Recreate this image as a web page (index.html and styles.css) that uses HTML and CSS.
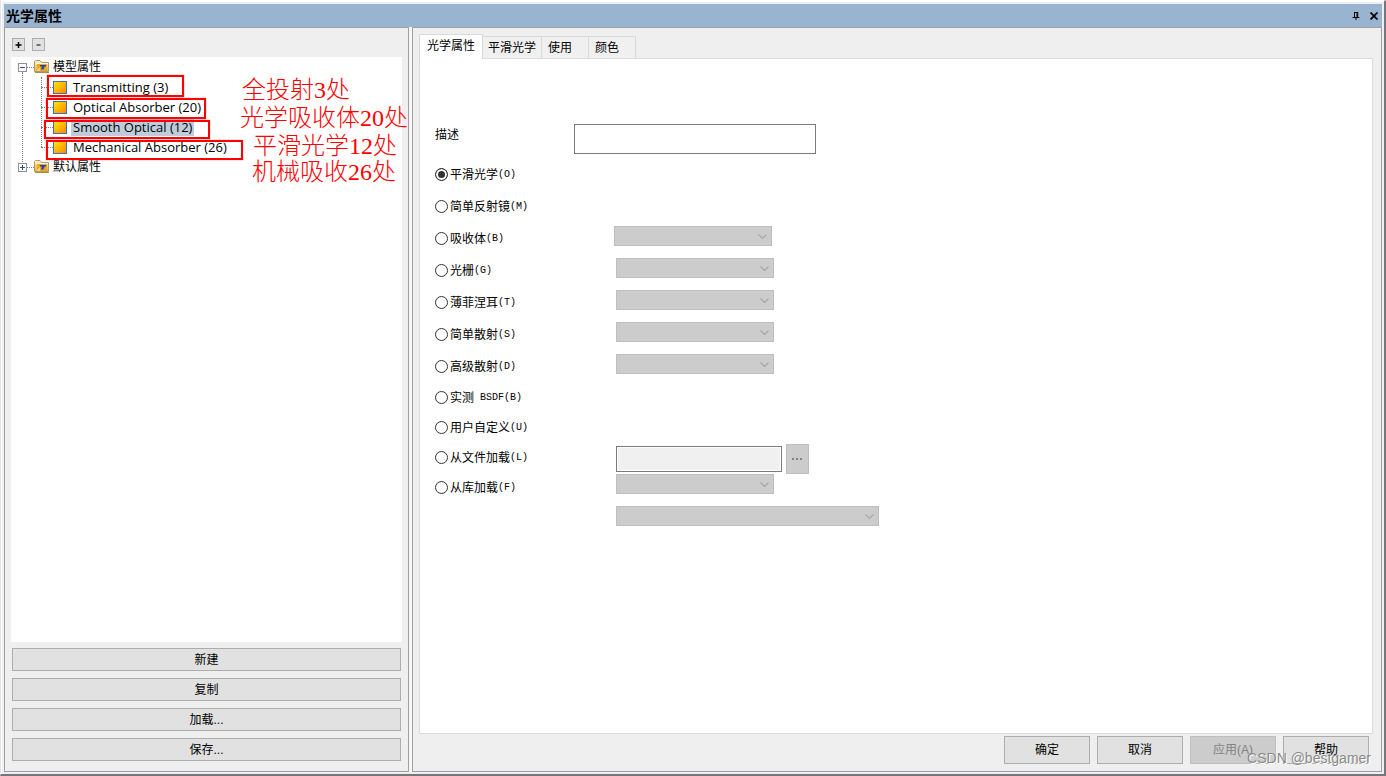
FILE: index.html
```html
<!DOCTYPE html>
<html lang="zh-CN">
<head>
<meta charset="utf-8">
<title>光学属性</title>
<link rel="stylesheet" href="styles.css">
</head>
<body>
<svg class="defs" width="0" height="0" aria-hidden="true">
  <defs>
    <linearGradient id="gold" x1="0" y1="0" x2="1" y2="1"><stop offset="0" stop-color="#ffe800"/><stop offset="1" stop-color="#ff8400"/></linearGradient>
    <linearGradient id="tan" x1="0" y1="0" x2="0" y2="1"><stop offset="0" stop-color="#fff3c4"/><stop offset="1" stop-color="#dcae50"/></linearGradient>
    <symbol id="folder" viewBox="0 0 16 14">
      <path d="M.5 11.500V1.500L1.500.5H6L7.500 2.500H14.500V11.500Z" fill="url(#tan)" stroke="#b39a62"/>
      <path d="M2 3.500H14" stroke="#fff8dc"/>
      <path d="M3 4H13V11H3Z" fill="#f3a51c"/>
      <path d="M6 5H12V6.500H10.500L9.500 9.500H7L8 6.500H6Z" fill="#1747b5"/>
      <path d="M3 10L6 7V11H3Z" fill="#ffd45c"/>
      <path d="M1 12.500H15" stroke="#a98d4d"/>
    </symbol>
    <symbol id="material" viewBox="0 0 14 13">
      <rect x=".5" y=".5" width="13" height="12" fill="url(#gold)" stroke="#3a6fc4"/>
    </symbol>
    <symbol id="chevron" viewBox="0 0 9 6"><path d="M.5 .5L4.500 4.500L8.500 .5" fill="none" stroke="#a6a6a6" stroke-width="1.200"/></symbol>
  </defs>
</svg>
<div class="window">
  <header class="titlebar">
    <h1 class="title">光学属性</h1>
    <button class="caption-btn" type="button" aria-label="固定"><svg width="8" height="8" viewBox="0 0 8 8"><path d="M2 .5H6M2.500 0V5M5 0V5M5.700 0V5M.5 5.500H7.500M4 5V8" fill="none" stroke="#000"/></svg></button>
    <button class="caption-btn" type="button" aria-label="关闭"><svg width="8" height="8" viewBox="0 0 8 8"><path d="M.5 .5L7.500 7.500M7.500 .5L.5 7.500" fill="none" stroke="#000" stroke-width="1.800"/></svg></button>
  </header>
  <div class="panes">
    <aside class="pane sidebar">
      <div class="toolbar">
        <button class="mini" type="button" aria-label="展开"><svg width="7" height="7" viewBox="0 0 7 7"><path d="M.5 4H6.500M3.500 1V7" stroke="#000" stroke-width="1.500"/></svg></button>
        <button class="mini" type="button" aria-label="折叠"><svg width="7" height="7" viewBox="0 0 7 7"><path d="M1.500 4H5.500" stroke="#000"/></svg></button>
      </div>
      <div class="tree">
        <ul class="roots">
          <li>
            <div class="node root"><button class="twisty" type="button" aria-label="折叠"><svg width="9" height="9" viewBox="0 0 9 9"><path d="M2 4.500H7" stroke="#2d4f9c"/></svg></button><i class="link"></i><svg class="folder" width="16" height="14"><use href="#folder"/></svg><span>模型属性</span></div>
            <ul class="children">
              <li class="node"><i class="link"></i><svg width="14" height="13"><use href="#material"/></svg><span class="name">Transmitting (3)</span></li>
              <li class="node"><i class="link"></i><svg width="14" height="13"><use href="#material"/></svg><span class="name">Optical Absorber (20)</span></li>
              <li class="node"><i class="link"></i><svg width="14" height="13"><use href="#material"/></svg><span class="name selected">Smooth Optical (12)</span></li>
              <li class="node"><i class="link"></i><svg width="14" height="13"><use href="#material"/></svg><span class="name">Mechanical Absorber (26)</span></li>
            </ul>
          </li>
          <li>
            <div class="node root"><button class="twisty" type="button" aria-label="展开"><svg width="9" height="9" viewBox="0 0 9 9"><path d="M2 4.500H7M4.500 2V7" stroke="#2d4f9c"/></svg></button><i class="link"></i><svg class="folder" width="16" height="14"><use href="#folder"/></svg><span>默认属性</span></div>
          </li>
        </ul>
        <div class="mark mark-1"></div>
        <div class="mark mark-2"></div>
        <div class="mark mark-3"></div>
        <div class="mark mark-4"></div>
        <p class="note note-1">全投射3处</p>
        <p class="note note-2">光学吸收体20处</p>
        <p class="note note-3">平滑光学12处</p>
        <p class="note note-4">机械吸收26处</p>
      </div>
      <div class="actions">
        <button class="btn" type="button">新建</button>
        <button class="btn" type="button">复制</button>
        <button class="btn" type="button">加载...</button>
        <button class="btn" type="button">保存...</button>
      </div>
    </aside>
    <main class="pane editor">
      <div class="tabs" role="tablist">
        <button class="tab active" type="button" role="tab" aria-selected="true">光学属性</button>
        <button class="tab" type="button" role="tab">平滑光学</button>
        <button class="tab wide" type="button" role="tab">使用</button>
        <button class="tab wide" type="button" role="tab">颜色</button>
      </div>
      <form class="sheet" role="tabpanel">
        <div class="describe">
          <label for="desc">描述</label>
          <input class="field" id="desc" type="text">
        </div>
        <div class="options">
          <div class="radios">
            <label class="option"><input type="radio" name="kind" checked>平滑光学<span class="key">(O)</span></label>
            <label class="option"><input type="radio" name="kind">简单反射镜<span class="key">(M)</span></label>
            <label class="option"><input type="radio" name="kind">吸收体<span class="key">(B)</span></label>
            <label class="option"><input type="radio" name="kind">光栅<span class="key">(G)</span></label>
            <label class="option"><input type="radio" name="kind">薄菲涅耳<span class="key">(T)</span></label>
            <label class="option"><input type="radio" name="kind">简单散射<span class="key">(S)</span></label>
            <label class="option"><input type="radio" name="kind">高级散射<span class="key">(D)</span></label>
            <label class="option short"><input type="radio" name="kind">实测<span class="key"> BSDF(B)</span></label>
            <label class="option short"><input type="radio" name="kind">用户自定义<span class="key">(U)</span></label>
            <label class="option short"><input type="radio" name="kind">从文件加载<span class="key">(L)</span></label>
            <label class="option short"><input type="radio" name="kind">从库加载<span class="key">(F)</span></label>
          </div>
          <div class="params">
            <div class="combo"><select disabled aria-label="吸收体"></select><svg width="9" height="6"><use href="#chevron"/></svg></div>
            <div class="group">
              <div class="combo"><select disabled aria-label="光栅"></select><svg width="9" height="6"><use href="#chevron"/></svg></div>
              <div class="combo"><select disabled aria-label="薄菲涅耳"></select><svg width="9" height="6"><use href="#chevron"/></svg></div>
              <div class="combo"><select disabled aria-label="简单散射"></select><svg width="9" height="6"><use href="#chevron"/></svg></div>
              <div class="combo"><select disabled aria-label="高级散射"></select><svg width="9" height="6"><use href="#chevron"/></svg></div>
            </div>
            <div class="group sources">
              <div class="file"><input class="field path" type="text" disabled aria-label="文件"><button class="btn browse" type="button" disabled aria-label="浏览"><svg width="10" height="2" viewBox="0 0 10 2"><path d="M0 0H2V2H0ZM4 0H6V2H4ZM8 0H10V2H8Z" fill="#838383"/></svg></button></div>
              <div class="combo"><select disabled aria-label="库"></select><svg width="9" height="6"><use href="#chevron"/></svg></div>
              <div class="combo long"><select disabled aria-label="库条目"></select><svg width="9" height="6"><use href="#chevron"/></svg></div>
            </div>
          </div>
        </div>
      </form>
      <footer class="footer">
        <button class="btn" type="button">确定</button>
        <button class="btn" type="button">取消</button>
        <button class="btn" type="button" disabled>应用(A)</button>
        <button class="btn" type="button">帮助</button>
      </footer>
    </main>
  </div>
  <div class="watermark">CSDN @bestgamer</div>
</div>
</body>
</html>
```
FILE: styles.css
```css
* { box-sizing: border-box; }

body {
  margin: 0;
  font: 12px/16px "Liberation Sans", "Noto Sans CJK SC", sans-serif;
  color: #000;
}

button, input, select { font: inherit; color: inherit; margin: 0; }
ul { list-style: none; margin: 0; padding: 0; }
svg { display: block; flex: none; }
.defs { position: absolute; }

.window {
  position: relative;
  display: flex;
  flex-direction: column;
  min-height: 100vh;
  padding: 3px 2px 2px 3px;
  background: #efefef;
  border: solid;
  border-width: 1px 2px 2px 1px;
  border-color: #fff #77767a #77767a #e3e3e3;
  box-shadow: inset 1px 1px #fff;
}

.titlebar {
  display: flex;
  align-items: center;
  height: 23px;
  padding: 0 0 0 2px;
  gap: 2px;
  background: #99b4d1;
}
.title { flex: 1; margin: 0; font-size: 14px; line-height: 20px; }
.caption-btn {
  display: flex;
  align-items: center;
  justify-content: center;
  width: 16px;
  height: 16px;
  padding: 0;
  border: 0;
  background: none;
}

.panes { flex: 1; display: flex; gap: 3px; background: #f7f7f7; }
.pane { display: flex; flex-direction: column; border: 1px solid #a0a0a0; background: #efefef; }

.sidebar { flex: none; width: 405px; padding: 10px 6px; }
.toolbar { display: flex; gap: 7px; padding: 0 1px; margin-bottom: 6px; }
.mini {
  display: flex;
  align-items: center;
  justify-content: center;
  width: 13px;
  height: 13px;
  padding: 0;
  border: 1px solid #adadad;
  background: #e1e1e1;
}

.tree { position: relative; flex: 1; background: #fff; }
.roots { position: relative; }
.roots::before, .children::before {
  content: "";
  position: absolute;
  border-left: 1px dotted #808080;
}
.roots::before { left: 11px; top: 15px; bottom: 15px; }
.children { position: relative; padding-left: 30px; }
.children::before { left: 30px; top: 0; bottom: 10px; }
.node { display: flex; align-items: center; height: 20px; white-space: nowrap; }
.root { padding-left: 7px; }
.folder { margin-right: 3px; }
.twisty {
  position: relative;
  width: 9px;
  height: 9px;
  padding: 0;
  border: 0;
  background: #fff;
  box-shadow: inset 0 0 0 1px #919191;
}
.link { width: 7px; border-top: 1px dotted #808080; }
.children .link { width: 12px; }
.name { margin-left: 4px; padding: 0 2px; font: 13px/18px "Open Sans", sans-serif; }
.selected { background: #bfcddb; }

.mark { position: absolute; border: 2px solid #f00; box-shadow: 0 0 1px #f66; }
.mark-1 { left: 36px; top: 18px; width: 137px; height: 22px; }
.mark-2 { left: 35px; top: 41px; width: 160px; height: 21px; }
.mark-3 { left: 33px; top: 63px; width: 166px; height: 19px; }
.mark-4 { left: 35px; top: 83px; width: 197px; height: 20px; }
.note {
  position: absolute;
  z-index: 1;
  margin: 0;
  white-space: nowrap;
  color: #f00;
  font: 300 24px/28px "Liberation Serif", "Noto Sans CJK SC", serif;
}
.note-1 { left: 231px; top: 19px; }
.note-2 { left: 229px; top: 47px; }
.note-3 { left: 242px; top: 75px; }
.note-4 { left: 241px; top: 101px; }

.actions { display: flex; flex-direction: column; gap: 7px; margin: 6px 1px 0; }
.btn {
  height: 23px;
  padding: 0;
  border: 1px solid #adadad;
  background: #e1e1e1;
}
.btn:disabled { border-color: #bfbfbf; background: #ccc; color: #838383; }

.editor { flex: 1; padding: 6px 8px 7px 6px; }
.tabs { position: relative; display: flex; align-items: flex-end; height: 24px; }
.tab {
  height: 22px;
  padding: 0 5px;
  border: 1px solid #d9d9d9;
  border-width: 1px 1px 0 0;
  background: #f0f0f0;
}
.tab.wide { padding: 0 16px 0 6px; }
.tab.active {
  height: 25px;
  margin-bottom: -1px;
  padding: 0 7px 2px 7px;
  border-left-width: 1px;
  background: #fff;
  z-index: 1;
}
.sheet { flex: 1; padding: 65px 15px 15px; border: 1px solid #dcdcdc; background: #fff; }
.describe { display: grid; grid-template-columns: 139px 242px; margin-bottom: 5px; }
.describe label { padding-top: 3px; }
.field { height: 30px; padding: 0 4px; border: 1px solid #7a7a7a; background: #fff; }

.options { display: grid; grid-template-columns: 179px 1fr; }
.option { display: flex; align-items: center; height: 32px; white-space: pre; }
.option.short { height: 30px; }
.option input {
  appearance: none;
  width: 13px;
  height: 13px;
  margin: 0 2px 2px 0;
  border: 1px solid #333;
  border-radius: 50%;
  background: #fff;
}
.option input:checked { background: #333; box-shadow: inset 0 0 0 2px #fff; }
.key { font: 10px/16px "Liberation Mono", monospace; }

.params { padding-top: 67px; }
.combo { position: relative; width: 158px; height: 20px; }
.combo.long { width: 263px; }
.combo select {
  display: block;
  appearance: none;
  width: 100%;
  height: 100%;
  border: 1px solid #bfbfbf;
  border-radius: 0;
  background: #ccc;
  opacity: 1;
}
.combo svg { position: absolute; right: 5px; top: 8px; }
.group { display: flex; flex-direction: column; gap: 12px; padding: 12px 0 0 2px; }
.sources { padding-top: 70px; }
.file { display: flex; align-items: center; gap: 4px; margin-bottom: -12px; }
.path { width: 166px; height: 26px; background: #f0f0f0; box-shadow: inset 0 0 0 1px #fff; }
.browse { display: flex; align-items: center; justify-content: center; width: 23px; height: 30px; padding-right: 2px; }

.footer { display: flex; justify-content: flex-end; gap: 7px; padding: 2px 4px 0 0; }
.footer .btn { width: 86px; height: 28px; }

.watermark {
  position: absolute;
  right: 13px;
  bottom: 6px;
  color: #8a8a8a;
  font: 14px/20px "Liberation Sans", sans-serif;
  text-shadow: 1px 1px #fff;
  pointer-events: none;
}
```
